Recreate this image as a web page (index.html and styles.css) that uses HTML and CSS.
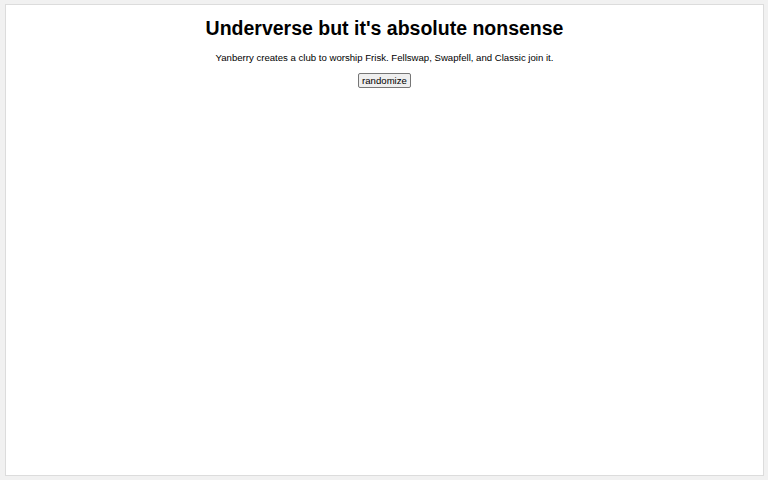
FILE: index.html
```html
<!DOCTYPE html>
<html>
<head lang="en">
    <meta charset="UTF-8">
    <title>Underverse but it's absolute nonsense</title>
    <link rel="stylesheet" href="styles.css">
</head>
<body>
<div class="page">
    <h1 class="title">Underverse but it's absolute nonsense</h1>
    <p class="plot" id="plot">Yanberry creates a club to worship Frisk. Fellswap, Swapfell, and Classic join it.</p>
    <button class="btn" id="btn">randomize</button>
</div>
</body>
</html>
```
FILE: styles.css
```css
*{
    margin: 0;
    padding: 0;
}
html, body{
    height: 100%;
}
body{
    background: #f1f1f1;
    padding: 4px 4px 4px 5px;
    box-sizing: border-box;
    font-family: "Liberation Sans", Arial, sans-serif;
}
.page{
    height: 100%;
    box-sizing: border-box;
    background: #fff;
    border: 1px solid #dcdcdc;
    text-align: center;
    padding-top: 11px;
}
.title{
    font-size: 19.5px;
    font-weight: bold;
    color: #000;
    line-height: 24px;
}
.plot{
    font-size: 9.6px;
    line-height: 12px;
    margin-top: 12px;
    color: #000;
}
.btn{
    margin-top: 9px;
    font-family: "Liberation Sans", Arial, sans-serif;
    font-size: 9.6px;
    padding: 1px 3px;
    background: #efefef;
    border: 1px solid #767676;
    border-radius: 2px;
    color: #000;
}
```
